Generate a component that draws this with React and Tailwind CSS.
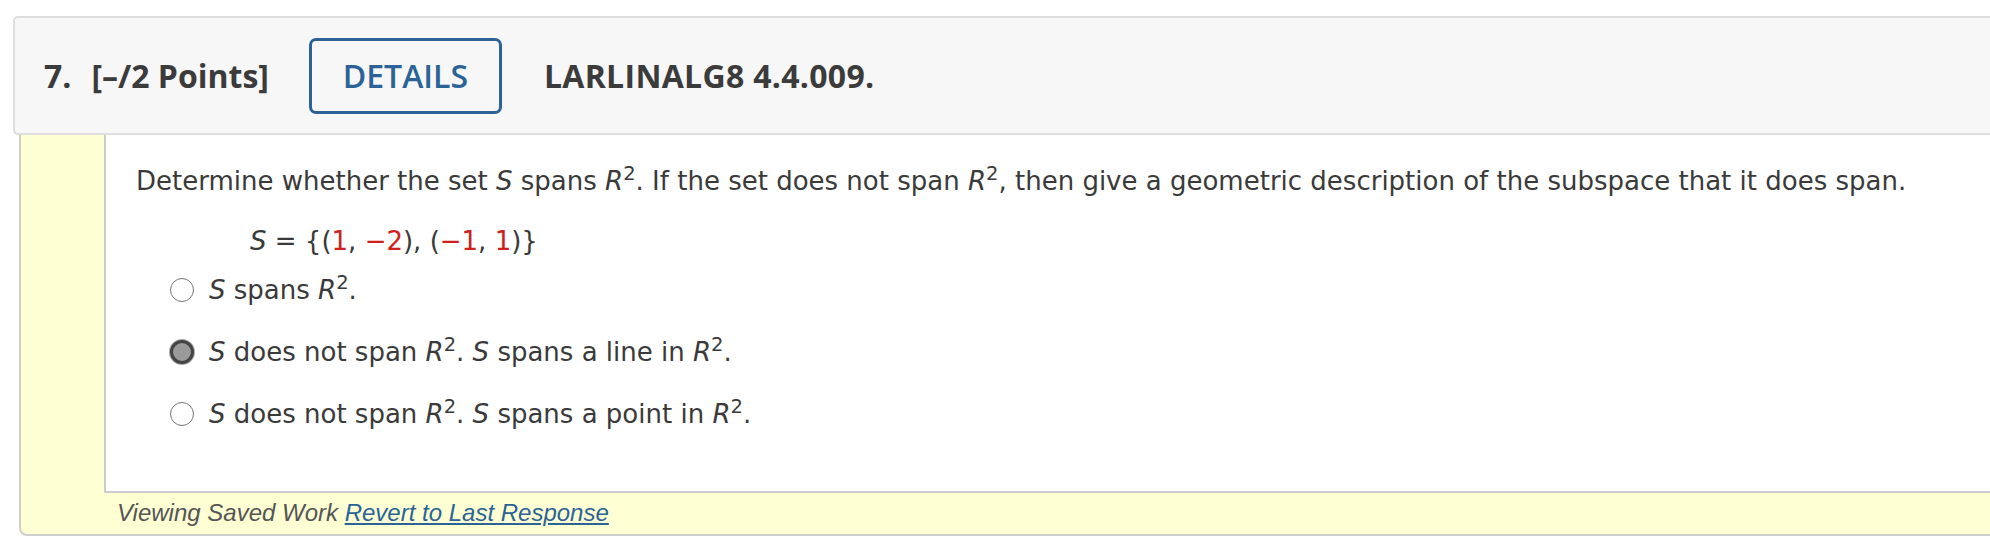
import React from "react";

function Radio({ checked }) {
  return checked ? (
    <span className="inline-block w-[24px] h-[24px] rounded-full border-[3px] border-[#444444] bg-[#9a9a9a] ring-1 ring-[#a8a8a8] shrink-0" />
  ) : (
    <span className="inline-block w-[24px] h-[24px] rounded-full border-[1.5px] border-[#767676] bg-white shrink-0" />
  );
}

function R2() {
  return (
    <>
      <i>R</i>
      <sup>2</sup>
    </>
  );
}

export default function App() {
  return (
    <div className="w-[1990px] h-[536px] overflow-hidden bg-white pt-[16px] pl-[13px]">
      <div className="w-[2000px]">
        <div
          className="h-[119px] bg-[#f7f7f7] border-2 border-r-0 border-[#dedede] rounded-l-[5px] flex items-center pl-[29px] text-[#3b3b3b] font-bold text-[32px]"
          style={{ fontFamily: '"Open Sans", "Noto Sans", sans-serif' }}
        >
          <span>7.</span>
          <span className="ml-[20px]">[–/2 Points]</span>
          <div className="ml-[40px] w-[193px] h-[76px] border-[3px] border-[#2d6297] rounded-[7px] flex items-center justify-center text-[#2b6396] font-semibold">
            DETAILS
          </div>
          <span className="ml-[42px] tracking-[0.3px]">LARLINALG8 4.4.009.</span>
        </div>
        <div className="ml-[6px] h-[401px] bg-[#ffffd4] border-l-2 border-b-2 border-[#cfcfcf] rounded-bl-[8px] pl-[83px] flex flex-col">
          <div
            className="h-[358px] bg-white border-l-2 border-b-2 border-[#cccccc] pt-[27px] pl-[30px] text-[26px] leading-[38px] text-[#3a3a3a]"
            style={{ fontFamily: '"DejaVu Sans", Verdana, sans-serif' }}
          >
            <p>
              Determine whether the set <i>S</i> spans <R2 />. If the set does not span <R2 />, then give a geometric
              description of the subspace that it does span.
            </p>
            <p className="mt-[22px] pl-[114px]">
              <i>S</i> = {"{"}(<span className="text-[#d0201c]">1</span>, <span className="text-[#d0201c]">−2</span>), (
              <span className="text-[#d0201c]">−1</span>, <span className="text-[#d0201c]">1</span>){"}"}
            </p>
            <div className="mt-[11px] pl-[34px] flex flex-col gap-[24px]">
              <div className="flex items-center h-[38px]">
                <Radio />
                <span className="ml-[15px]">
                  <i>S</i> spans <R2 />.
                </span>
              </div>
              <div className="flex items-center h-[38px]">
                <Radio checked />
                <span className="ml-[15px]">
                  <i>S</i> does not span <R2 />. <i>S</i> spans a line in <R2 />.
                </span>
              </div>
              <div className="flex items-center h-[38px]">
                <Radio />
                <span className="ml-[15px]">
                  <i>S</i> does not span <R2 />. <i>S</i> spans a point in <R2 />.
                </span>
              </div>
            </div>
          </div>
          <div
            className="pl-[13px] pt-[7px] text-[24px] leading-[26px] italic text-[#555555]"
            style={{ fontFamily: '"Liberation Sans", Arial, sans-serif' }}
          >
            Viewing Saved Work{" "}
            <a className="text-[#2a6496] underline" href="#">
              Revert to Last Response
            </a>
          </div>
        </div>
      </div>
    </div>
  );
}
